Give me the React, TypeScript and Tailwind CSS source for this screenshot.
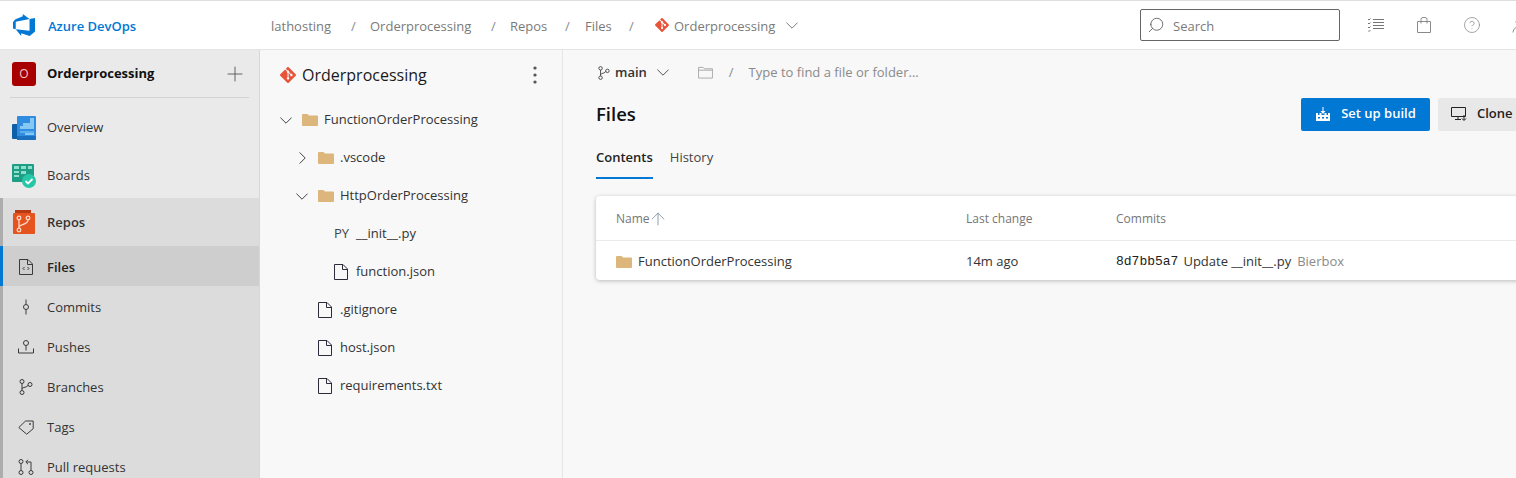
import { ArrowUp, CircleHelp, MoreVertical, Plus, Search } from 'lucide-react';

const gitPath =
  'M23.546 10.93L13.067.452c-.604-.603-1.582-.603-2.188 0L8.708 2.627l2.76 2.76c.645-.215 1.379-.07 1.889.441.516.515.658 1.258.438 1.9l2.658 2.66c.645-.223 1.387-.078 1.9.435.721.72.721 1.884 0 2.604-.719.719-1.881.719-2.6 0-.539-.541-.674-1.337-.404-1.996L12.86 8.955v6.525c.176.086.342.203.488.348.713.721.713 1.883 0 2.6-.719.721-1.889.721-2.609 0-.719-.719-.719-1.879 0-2.598.182-.18.387-.316.605-.406V8.835c-.217-.091-.424-.222-.6-.401-.545-.545-.676-1.342-.396-2.009L7.636 3.7.45 10.881c-.6.605-.6 1.584 0 2.189l10.48 10.477c.604.604 1.582.604 2.186 0l10.43-10.43c.605-.603.605-1.582 0-2.187';

const GitIcon = ({ className }: { className: string }) => (
  <svg viewBox="0 0 24 24" className={className}>
    <path d={gitPath} fill="#e8543a" />
  </svg>
);

const FolderIcon = ({ className }: { className: string }) => (
  <svg viewBox="0 0 16 14" className={className}>
    <path d="M0 2a1 1 0 0 1 1-1h4.500l1.500 1.600h8a1 1 0 0 1 1 1V12a1 1 0 0 1-1 1H1a1 1 0 0 1-1-1z" fill="#dcb67a" />
  </svg>
);

const FileIcon = () => (
  <svg viewBox="0 0 14 16" className="h-4 w-[14px] shrink-0" fill="none" stroke="#2b2b3a" strokeWidth="1">
    <path d="M.5.5h8.500l4.500 4.500v10.500h-13zM8.500.5v5h5" />
  </svg>
);

// thin chevrons, lucide's are too small at this stroke
const ChevDown = ({ className, color = '#555555' }: { className: string; color?: string }) => (
  <svg viewBox="0 0 12 7" className={`h-[7px] w-3 shrink-0 ${className}`} fill="none" stroke={color} strokeWidth="1">
    <path d="M.4.6L6 6.200 11.600.6" />
  </svg>
);

const ChevRight = ({ className }: { className: string }) => (
  <svg viewBox="0 0 7 12" className={`h-3 w-[7px] shrink-0 ${className}`} fill="none" stroke="#444444" strokeWidth="1">
    <path d="M.6.4L6.200 6 .6 11.600" />
  </svg>
);

const stroke = { fill: 'none', stroke: '#3a3a3a', strokeWidth: 1 };

const FilesNavIcon = () => (
  <svg viewBox="0 0 14 16" className="h-4 w-[14px]" {...stroke}>
    <path d="M.5.5h8.500l4.500 4.500v10.500h-13zM8.500.5v5h5" />
    <path d="M5.500 8l-1.500 1.500 1.500 1.500M8.500 8l1.500 1.500-1.500 1.500" />
  </svg>
);

const CommitsNavIcon = () => (
  <svg viewBox="0 0 10 16" className="h-4 w-[10px]" {...stroke}>
    <circle cx="5" cy="8" r="2.500" />
    <path d="M5 .5v5M5 10.500v5" />
  </svg>
);

const PushesNavIcon = () => (
  <svg viewBox="0 0 16 14" className="h-[14px] w-4" {...stroke}>
    <circle cx="8" cy="3" r="2.500" />
    <path d="M8 5.500v5M.5 8.500v4.500h15v-4.500" />
  </svg>
);

const BranchIcon = ({ className }: { className: string }) => (
  <svg viewBox="0 0 14 16" className={className} {...stroke}>
    <circle cx="3" cy="2.500" r="2" />
    <circle cx="3" cy="13.500" r="2" />
    <circle cx="11" cy="5.500" r="2" />
    <path d="M3 4.500v7M3 10c0-2 6-1.500 6-4" />
  </svg>
);

const TagsNavIcon = () => (
  <svg viewBox="0 0 16 16" className="h-4 w-4" {...stroke}>
    <path d="M.8 8.500L7.500 2h7.700v7.700L8.700 15.200z" />
    <circle cx="12" cy="5" r=".6" />
  </svg>
);

const PullNavIcon = () => (
  <svg viewBox="0 0 16 16" className="h-4 w-4" {...stroke}>
    <circle cx="3" cy="2.500" r="2" />
    <circle cx="3" cy="13.500" r="2" />
    <circle cx="13" cy="13.500" r="2" />
    <path d="M3 4.500v7M13 11.500V3H8M10 .8L7.800 3 10 5.200" />
  </svg>
);

const OverviewIcon = () => (
  <svg viewBox="0 0 24 24" className="h-6 w-6">
    <path d="M0 9a1 1 0 0 1 1-1h6v15H1a1 1 0 0 1-1-1z" fill="#0f5fa8" />
    <path d="M5 1a1 1 0 0 1 1-1h17a1 1 0 0 1 1 1v22a1 1 0 0 1-1 1H5z" fill="#2f8ce0" />
    <path d="M18 2h4v11H8v-3h3V7h7z" fill="#86c8f4" />
    <path d="M8 15h14v2H8z" fill="#5aaeea" />
    <path d="M13 17h9v2h-9z" fill="#86c8f4" />
    <path d="M5 20h19v3a1 1 0 0 1-1 1H5z" fill="#1a6fbf" />
  </svg>
);

const BoardsIcon = () => (
  <svg viewBox="0 0 24 24" className="h-6 w-6">
    <rect x="0" y="0" width="22" height="18" rx="1" fill="#1f9e86" />
    <path d="M2 2h5v3H2zM9 2h5v3H9zM16 2h4v3h-4zM2 7h5v2H2zM2 11h5v2H2zM9 7h5v3H9z" fill="#8ee0cc" />
    <circle cx="17" cy="17" r="7" fill="#26c6a8" />
    <path d="M13.500 17l2.500 2.500 4.500-4.500" fill="none" stroke="#ffffff" strokeWidth="1.800" />
  </svg>
);

const ReposIcon = () => (
  <svg viewBox="0 0 24 24" className="h-6 w-6">
    <rect x="3" y="0" width="16" height="5" fill="#b83a14" />
    <rect x="1" y="3" width="22" height="21" rx="1" fill="#e5541f" />
    <g fill="none" stroke="#ffd9c8" strokeWidth="1.300">
      <circle cx="7" cy="8" r="1.800" />
      <circle cx="7" cy="20" r="1.800" />
      <circle cx="16" cy="8" r="1.800" />
      <path d="M7 10v8M7 17c0-3 9-2 9-7" />
    </g>
  </svg>
);

const navRepos = [
  { label: 'Commits', icon: <CommitsNavIcon /> },
  { label: 'Pushes', icon: <PushesNavIcon /> },
  { label: 'Branches', icon: <BranchIcon className="h-4 w-[14px]" /> },
  { label: 'Tags', icon: <TagsNavIcon /> },
  { label: 'Pull requests', icon: <PullNavIcon /> },
];

const Slash = () => <span className="text-[#8a8a8a]">/</span>;

const Header = () => (
  <header className="flex h-[50px] shrink-0 items-center border-y border-t-[#dedede] border-b-[#e4e4e4] bg-white">
    <div className="flex w-[271px] shrink-0 items-center pl-[13px]">
      <svg viewBox="0 0 24 24" className="h-[22px] w-[22px]">
        <path
          d="M0 8.877L2.247 5.910l8.405-3.416V.022l7.370 5.393L2.966 8.338v8.225L0 15.707zm24-4.450v14.651l-5.753 4.900-9.303-3.057v3.056l-5.978-7.416 15.057 1.798V5.415z"
          fill="#0078d4"
        />
      </svg>
      <span className="ml-[13px] pt-[3px] text-[13px] font-semibold text-[#0078d4]">Azure DevOps</span>
    </div>
    <div className="flex items-center text-[13px] text-[#7a7a7a]">
      <span className="w-[80px] pt-[3px]">lathosting</span>
      <span className="w-[19px] pt-[3px]"><Slash /></span>
      <span className="w-[121px] pt-[3px]">Orderprocessing</span>
      <span className="w-[19px] pt-[3px]"><Slash /></span>
      <span className="w-[55px] pt-[3px]">Repos</span>
      <span className="w-[20px] pt-[3px]"><Slash /></span>
      <span className="w-[44px] pt-[3px]">Files</span>
      <span className="w-[26px] pt-[3px]"><Slash /></span>
      <GitIcon className="h-[14px] w-[14px]" />
      <span className="ml-[5px] w-[112px] pt-[3px]">Orderprocessing</span>
      <ChevDown className="" color="#7a7a7a" />
    </div>
    <div className="ml-[342px] flex h-8 w-[200px] shrink-0 items-center rounded-[2px] border border-[#666666] pl-[6px] text-[13px] text-[#7a7a7a]">
      <Search className="h-[18px] w-[18px] -scale-x-100 text-[#444444]" strokeWidth={1} />
      <span className="ml-[8px] pt-[3px]">Search</span>
    </div>
    <div className="ml-[28px] flex shrink-0 items-center gap-[32px] text-[#8a8a8a]">
      <span className="flex w-4 justify-center">
        <svg viewBox="0 0 16 14" className="h-[14px] w-4 shrink-0" fill="none" stroke="#777777" strokeWidth="1">
          <path d="M5 1.500h11M5 4.500h11M5 7.500h11M5 10.500h11M0 1l1 1 1.500-1.500M0 5l1 1 1.500-1.500M0 9l1 1 1.500-1.500M0 12.500l1 1 1.500-1.500" />
        </svg>
      </span>
      <span className="flex w-4 justify-center">
        <svg viewBox="0 0 14 16" className="h-4 w-[14px] shrink-0" fill="none" stroke="#8a8a8a" strokeWidth="1">
          <path d="M.5 4.500h13v11h-13zM4 6.500V2.500a2 2 0 0 1 2-2h2a2 2 0 0 1 2 2v4" />
        </svg>
      </span>
      <span className="flex w-4 justify-center">
        <CircleHelp className="h-[18px] w-[18px] shrink-0" strokeWidth={1} />
      </span>
      <svg viewBox="0 0 16 16" className="h-4 w-4 shrink-0" fill="none" stroke="#8a8a8a" strokeWidth="1">
        <circle cx="8" cy="5" r="4" />
        <path d="M1 15.500c.5-4 3-6 7-6s6.500 2 7 6" />
      </svg>
    </div>
  </header>
);

const Sidebar = () => (
  <nav className="flex w-[260px] shrink-0 flex-col border-r border-[#d8d8d8] bg-[#eaeaea] text-[13px] text-[#333333]">
    <div className="mx-[10px] mb-[6px] flex h-[48px] shrink-0 items-center border-b border-[#d2d2d2] pl-[2px] pr-[2px]">
      <span className="flex h-6 w-6 items-center justify-center rounded-[3px] bg-[#a80000] text-[12px] text-[#f3c6c6]">O</span>
      <span className="ml-[11px] flex-1 pt-[1px] font-bold text-[#111111]">Orderprocessing</span>
      <Plus className="h-6 w-6 text-[#555555]" strokeWidth={0.9} />
    </div>
    <div className="flex h-[48px] shrink-0 items-center pl-[12px]">
      <OverviewIcon />
      <span className="ml-[11px]">Overview</span>
    </div>
    <div className="flex h-[46px] shrink-0 items-center pl-[12px] pt-[1px]">
      <BoardsIcon />
      <span className="ml-[11px]">Boards</span>
    </div>
    <div className="flex-1 border-l-[3px] border-[#adadad] bg-[#dcdcdc]">
      <div className="flex h-[48px] items-center pl-[9px] font-semibold">
        <ReposIcon />
        <span className="ml-[11px] pt-[2px]">Repos</span>
      </div>
      <div className="relative flex h-[40px] items-center bg-[#cecece] pt-[2px] font-semibold text-[#222222]">
        <span className="absolute -left-[3px] top-0 h-full w-[3px] bg-[#0078d4]" />
        <span className="flex w-[44px] justify-center pl-[2px]"><FilesNavIcon /></span>
        <span className="pt-[2px]">Files</span>
      </div>
      {navRepos.map((item) => (
        <div key={item.label} className="flex h-[40px] items-center pt-[2px]">
          <span className="flex w-[44px] justify-center pl-[2px]">{item.icon}</span>
          <span className="pt-[2px]">{item.label}</span>
        </div>
      ))}
    </div>
  </nav>
);

const TreePanel = () => (
  <aside className="w-[303px] shrink-0 border-r border-[#e6e6e6] bg-[#f8f8f8] text-[13px] text-[#333333]">
    <div className="flex h-[50px] items-center pl-[20px] pr-[15px]">
      <GitIcon className="h-4 w-4" />
      <span className="ml-[6px] flex-1 text-[16px] text-[#1a1a1a]">Orderprocessing</span>
      <MoreVertical className="h-6 w-6 text-[#444444]" strokeWidth={1.2} />
    </div>
    <div className="flex flex-col pt-[1px]">
      <div className="flex h-[38px] items-center pl-[20px]">
        <ChevDown className="mr-[10px]" color="#444444" />
        <FolderIcon className="mr-[6px] h-[14px] w-4 shrink-0" />
        <span>FunctionOrderProcessing</span>
      </div>
      <div className="flex h-[38px] items-center pl-[39px]">
        <ChevRight className="mr-[12px]" />
        <FolderIcon className="mr-[6px] h-[14px] w-4 shrink-0" />
        <span>.vscode</span>
      </div>
      <div className="flex h-[38px] items-center pl-[36px]">
        <ChevDown className="mr-[10px]" color="#444444" />
        <FolderIcon className="mr-[6px] h-[14px] w-4 shrink-0" />
        <span>HttpOrderProcessing</span>
      </div>
      <div className="flex h-[38px] items-center pl-[74px]">
        <span className="mr-[7px] text-[#444444]">PY</span>
        <span>__init__.py</span>
      </div>
      {[
        { label: 'function.json', pad: 'pl-[74px]' },
        { label: '.gitignore', pad: 'pl-[58px]' },
        { label: 'host.json', pad: 'pl-[58px]' },
        { label: 'requirements.txt', pad: 'pl-[58px]' },
      ].map((row) => (
        <div key={row.label} className={`flex h-[38px] items-center ${row.pad}`}>
          <span className="mr-[8px]"><FileIcon /></span>
          <span>{row.label}</span>
        </div>
      ))}
    </div>
  </aside>
);

const MainPanel = () => (
  <main className="min-w-0 flex-1 bg-[#f8f8f8] text-[13px] text-[#333333]">
    <div className="w-[1015px] pl-[33px]">
      <div className="flex h-[45px] items-center pl-[2px]">
        <BranchIcon className="h-[14px] w-[12px]" />
        <span className="ml-[5px] font-semibold">main</span>
        <ChevDown className="ml-[10px]" />
        <svg viewBox="0 0 16 14" className="ml-[29px] h-[13px] w-[15px]" fill="none" stroke="#a8a8a8" strokeWidth="1">
          <path d="M.5 1.500h5l1.500 1.500h8.500v10h-15zM.5 4.500h15" />
        </svg>
        <span className="ml-[16px] text-[#8a8a8a]">/</span>
        <span className="ml-[15px] text-[#8a8a8a]">Type to find a file or folder...</span>
      </div>
      <div className="flex h-[37px] items-center justify-between">
        <h1 className="text-[18.500px] font-semibold text-[#111111]">Files</h1>
        <div className="mt-[1px] flex items-center gap-[8px]">
          <button className="flex h-[33px] w-[129px] items-center justify-center rounded-[2px] bg-[#0078d4] font-semibold text-white">
            <svg viewBox="0 0 16 16" className="mr-[10px] h-4 w-4">
              <path d="M1 9h14v6H1zM1 7h2v2H1zM4.500 7h2v2h-2zM9.500 7h2v2h-2zM13 7h2v2h-2zM7.500 1h1v6h-1zM5.500 5h5L8 8z" fill="#ffffff" />
              <path d="M3 11h2v1.500H3zM7 11h2v1.500H7zM11 11h2v1.500h-2z" fill="#0078d4" />
            </svg>
            Set up build
          </button>
          <button className="flex h-[33px] w-[140px] items-center rounded-[2px] bg-[#e8e8e8] pl-[13px] font-semibold text-[#222222]">
            <svg viewBox="0 0 16 14" className="mr-[10px] h-[14px] w-4" fill="none" stroke="#222222" strokeWidth="1">
              <path d="M.5.5h14v9H.5zM4 12.500h6M7 10v2.500M13 8v5M11 11.500l2 2 2-2" />
            </svg>
            Clone
          </button>
        </div>
      </div>
      <div className="mt-[8px] flex h-[39px] gap-[17px]">
        <span className="flex items-start border-b-2 border-[#0078d4] pt-[8px] font-semibold text-[#222222]">Contents</span>
        <span className="pt-[8px] text-[#444444]">History</span>
      </div>
      <div className="mt-[17px] rounded-[4px] bg-white shadow-[0_1px_4px_rgba(0,0,0,0.25)]">
        <div className="flex h-[45px] items-center border-b border-[#eaeaea] text-[12px] text-[#767676]">
          <span className="flex w-[370px] items-center pl-[20px] pt-[1px]">
            Name
            <ArrowUp className="-ml-[2px] h-5 w-5 text-[#7a8a9a]" strokeWidth={1} />
          </span>
          <span className="w-[150px] pt-[1px]">Last change</span>
          <span className="pt-[1px]">Commits</span>
        </div>
        <div className="flex h-[39px] items-center pt-[2px]">
          <span className="flex w-[370px] items-center pl-[20px]">
            <FolderIcon className="mr-[6px] h-[14px] w-4" />
            FunctionOrderProcessing
          </span>
          <span className="w-[150px]">14m ago</span>
          <span className="flex items-center">
            <span className="font-['Liberation_Mono',monospace] text-[13px] text-[#222222]">8d7bb5a7</span>
            <span className="ml-[5px]">Update __init__.py</span>
            <span className="ml-[6px] text-[#8a8a8a]">Bierbox</span>
          </span>
        </div>
      </div>
    </div>
  </main>
);

export default function App() {
  return (
    <div className="flex h-[478px] w-[1516px] flex-col overflow-hidden bg-[#f8f8f8] font-['Open_Sans',sans-serif]">
      <Header />
      <div className="flex min-h-0 flex-1 overflow-hidden">
        <Sidebar />
        <TreePanel />
        <MainPanel />
      </div>
    </div>
  );
}
